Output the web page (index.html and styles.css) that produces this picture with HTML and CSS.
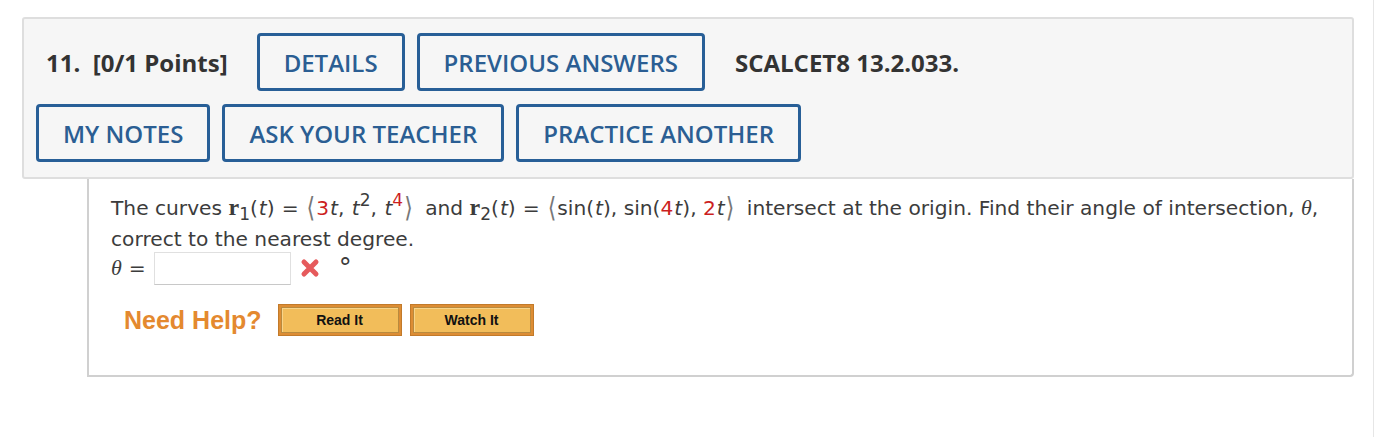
FILE: index.html
```html
<!DOCTYPE html>
<html>
<head>
<meta charset="utf-8">
<link rel="stylesheet" href="styles.css">
</head>
<body>
<div class="page">
  <div class="main">
    <div class="qheader">
      <div class="hrow">
        <span class="qtitle">11.&nbsp; [0/1 Points]</span>
        <span class="btn">DETAILS</span>
        <span class="btn">PREVIOUS ANSWERS</span>
        <span class="qref">SCALCET8 13.2.033.</span>
      </div>
      <div class="hrow">
        <span class="btn">MY NOTES</span>
        <span class="btn">ASK YOUR TEACHER</span>
        <span class="btn">PRACTICE ANOTHER</span>
      </div>
    </div>
    <div class="qbody">
      <p class="qtext">The curves <span class="math"><b class="vec">r</b><sub>1</sub>(<i class="t">t</i>)<span class="op">=</span><span class="ang">⟨</span><span class="red">3</span><i class="t">t</i>, <i class="t">t</i><sup>2</sup>, <i class="t">t</i><sup class="red">4</sup><span class="ang">⟩</span></span> and <span class="math"><b class="vec">r</b><sub>2</sub>(<i class="t">t</i>)<span class="op">=</span><span class="ang">⟨</span>sin(<i class="t">t</i>), sin(<span class="red">4</span><i class="t">t</i>), <span class="red">2</span><i class="t">t</i><span class="ang">⟩</span></span> intersect at the origin. Find their angle of intersection, <i class="var">θ</i>,<br>correct to the nearest degree.</p>
      <div class="answer">
        <i class="var">θ</i><span class="eq">=</span>
        <span class="input"></span>
        <svg class="xmark" width="20" height="20" viewBox="0 0 20 20"><path d="M4 4 L16 16 M16 4 L4 16" stroke="#e65a5c" stroke-width="5" stroke-linecap="round"/></svg>
        <span class="deg">°</span>
      </div>
      <div class="help">
        <span class="needhelp">Need Help?</span>
        <span class="hbtn"><span class="hin">Read It</span></span>
        <span class="hbtn"><span class="hin">Watch It</span></span>
      </div>
    </div>
  </div>
  <div class="rail"></div>
</div>
</body>
</html>
```
FILE: styles.css
```css
html, body { margin: 0; padding: 0; background: #fff; }
.page { display: flex; height: 437px; width: 1377px; }
.main { flex: 1; min-width: 0; padding: 17px 19px 0 22px; }
.rail { width: 3px; flex: none; border-left: 1px solid #e6e6e6; }

.qheader {
  display: flex; flex-direction: column;
  gap: 13px;
  background: #f6f6f6;
  border: 2px solid #dedede;
  border-radius: 3px;
  padding: 14px 12px 15px;
  font-family: "Open Sans", sans-serif;
}
.hrow { display: flex; align-items: center; gap: 12px; }
.qtitle { font-weight: 700; font-size: 24px; color: #333; padding-left: 10px; margin-right: 17px; }
.qref { font-weight: 700; font-size: 24px; color: #333; margin-left: 18px; }
.btn {
  display: inline-flex; align-items: center;
  height: 52px; padding: 0 24px;
  border: 3px solid #285f97; border-radius: 4px;
  color: #2b5e93; font-weight: 600; font-size: 24px;
}

.qbody {
  margin-left: 65px;
  border: 2px solid #d0d0d0; border-top: none;
  border-radius: 0 0 4px 0;
  padding: 13px 22px 39px 22px;
  font-family: "DejaVu Sans", Verdana, sans-serif;
  font-size: 20.2px; color: #3c3c3c;
  background: #fff;
}
.qtext { margin: 0; line-height: 31px; white-space: nowrap; }
.math { margin: 0 5px 0 0; }
.vec { font-family: "Liberation Serif", serif; font-weight: 700; font-size: 24px; }
.t { font-style: italic; margin: 0 0 0 1px; }
.var { font-family: "Liberation Serif", serif; font-style: italic; font-size: 22px; }
.op { padding: 0 7px; }
sub, sup { font-size: 17px; line-height: 0; }
sub { vertical-align: -5px; }
sup { vertical-align: 9px; }
.red { color: #cc1f1f; }
.ang { color: #777; font-size: 22px; display: inline-block; transform: scaleY(1.25); margin: 0 1px; }

.answer { display: flex; align-items: center; height: 34px; margin-top: -4px; }
.eq { margin: 0 8px 0 7px; }
.input { width: 135px; height: 31px; border: 1px solid #e0e0e0; border-bottom-color: #c8c8c8; background: #fff; }
.xmark { margin-left: 9px; }
.deg { margin-left: 19px; margin-top: 0; font-size: 26px; line-height: 1; }

.help { display: flex; align-items: center; gap: 8px; margin-top: 19px; padding-left: 13px; }
.needhelp { font-family: "Liberation Sans", Arial, sans-serif; font-weight: 700; font-size: 25px; color: #e4892f; margin-right: 8px; }
.hbtn {
  display: inline-block; border: 1px solid #c27a2a; background: #dd8d34; padding: 2px;
}
.hin {
  display: block; width: 116px; height: 24px; line-height: 24px;
  background: #f2bd5a; border: 1px solid #b98a3e;
  box-shadow: inset 1px 1px 0 #f8d48a;
  text-align: center; font-family: "Liberation Sans", Arial, sans-serif; font-weight: 700; font-size: 14px; color: #111;
}
```
